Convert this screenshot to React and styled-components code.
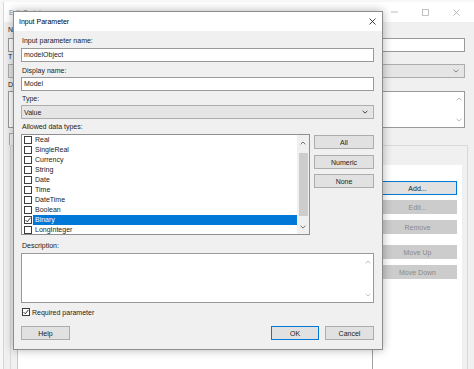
import React from "react";
import styled, { createGlobalStyle } from "styled-components";

const GlobalStyle = createGlobalStyle`
  html, body {
    margin: 0;
    padding: 0;
  }
  body {
    width: 474px;
    height: 369px;
    overflow: hidden;
    background: #f7f7f7;
    font-family: "Liberation Sans", Arial, sans-serif;
    font-size: 7px;
    color: #1b1b1b;
  }
  * {
    box-sizing: border-box;
  }
`;

const Screen = styled.div`
  position: relative;
  width: 474px;
  height: 369px;
  overflow: hidden;
`;

/* ---------- background window (mostly hidden by the dialog) ---------- */

const BackWindow = styled.div`
  margin: 2px 0 0 3px;
  width: 480px;
  height: 380px;
  display: flex;
  flex-direction: column;
  background: #f0f0f0;
  border-left: 1px solid #d6d6d6;
`;

const BackTitleBar = styled.div`
  height: 20px;
  background: #ffffff;
  display: flex;
  align-items: center;
  justify-content: space-between;
  padding: 0 11px 0 5px;
  color: #8a8a8a;
`;

const CaptionGroup = styled.div`
  display: flex;
`;

const CaptionButton = styled.div`
  width: 31px;
  height: 20px;
  display: flex;
  align-items: center;
  justify-content: center;
`;

const BackBody = styled.div`
  flex: 1;
  display: flex;
  flex-direction: column;
  padding: 0 18px 0 4px;
`;

const Label = styled.div`
  height: 10px;
  line-height: 10px;
  margin-top: ${({ $mt }) => $mt || 0}px;
  padding-left: ${({ $pl }) => $pl || 0}px;
  white-space: nowrap;
`;

const TextBox = styled.div`
  height: ${({ $h }) => $h || 14}px;
  margin-top: ${({ $mt }) => $mt || 0}px;
  background: #ffffff;
  border: 1px solid #999999;
  padding-left: 2px;
  line-height: 12px;
  white-space: nowrap;
  display: flex;
  justify-content: space-between;
`;

const ComboBox = styled.div`
  height: 14px;
  margin-top: ${({ $mt }) => $mt || 0}px;
  background: #e5e5e5;
  border: 1px solid #adadad;
  padding: 0 5px 0 2px;
  display: flex;
  align-items: center;
  justify-content: space-between;
`;

const ArrowStack = styled.div`
  width: 11px;
  display: flex;
  flex-direction: column;
  justify-content: space-between;
  align-items: center;
  padding: ${({ $pad }) => $pad || "5px 0"};
`;

const TabHeader = styled.div`
  margin: 5px 0 0 1px;
  width: 50px;
  height: 12px;
  border: 1px solid #adadad;
  border-bottom: none;
  background: #f7f7f7;
`;

const TabPage = styled.div`
  flex: 1;
  margin: 0 -3px 0 2px;
  border: 1px solid #d9d9d9;
  background: #f0f0f0;
  padding: 19px 5px 0 6px;
  display: flex;
`;

const WhitePanel = styled.div`
  flex: 1;
  background: #ffffff;
  border-left: 1px solid #c8c8c8;
  display: flex;
`;

const ListPane = styled.div`
  width: 355px;
  border-right: 1px solid #a0a0a0;
`;

const SideColumn = styled.div`
  display: flex;
  flex-direction: column;
  padding: 16px 0 0 5px;
`;

const SideButton = styled.div`
  width: 79px;
  height: 14px;
  margin-top: ${({ $mt }) => $mt || 0}px;
  display: flex;
  align-items: center;
  justify-content: center;
  background: ${({ $disabled }) => ($disabled ? "#cccccc" : "#e1e1e1")};
  border: 1px solid ${({ $disabled }) => ($disabled ? "#cccccc" : "#0078d7")};
  color: ${({ $disabled }) => ($disabled ? "#8a8a8a" : "#1b1b1b")};
`;

/* ---------- dialog ---------- */

const Dialog = styled.div`
  position: absolute;
  left: 13px;
  top: 11px;
  width: 370px;
  height: 339px;
  border: 1px solid #8c8c8c;
  background: #f0f0f0;
  box-shadow: 0 0 9px rgba(0, 0, 0, 0.3);
  display: flex;
  flex-direction: column;
`;

const DialogTitleBar = styled.div`
  height: 19px;
  background: #ffffff;
  display: flex;
  align-items: center;
  justify-content: space-between;
  padding-left: 5px;
  color: #000000;
`;

const CloseButton = styled.div`
  width: 20px;
  height: 19px;
  display: flex;
  align-items: center;
  justify-content: center;
`;

const DialogBody = styled.div`
  flex: 1;
  display: flex;
  flex-direction: column;
  padding: 0 8px 9px 7px;
`;

const ListRow = styled.div`
  margin-top: 2px;
  display: flex;
  gap: 4px;
`;

const TypeList = styled.div`
  width: 289px;
  height: 101px;
  border: 1px solid #8f8f8f;
  background: #ffffff;
  display: flex;
`;

const Items = styled.div`
  flex: 1;
  overflow: hidden;
`;

const ItemRow = styled.div`
  height: 10px;
  display: flex;
  align-items: center;
`;

const CheckBox = styled.div`
  width: 8px;
  height: 8px;
  margin-left: ${({ $ml }) => $ml || 0}px;
  border: 1px solid #3c3c3c;
  background: #ffffff;
  display: flex;
  align-items: center;
  justify-content: center;
  flex: none;
`;

const ItemText = styled.div`
  flex: 1;
  height: 10px;
  line-height: 10px;
  margin-left: 1px;
  padding-left: 2px;
  background: ${({ $selected }) => ($selected ? "#0078d7" : "transparent")};
  color: ${({ $selected }) => ($selected ? "#ffffff" : "#1b1b1b")};
`;

const ScrollBar = styled.div`
  width: 12px;
  background: #f0f0f0;
  display: flex;
  flex-direction: column;
  align-items: center;
  padding: 6px 0 5px;
`;

const ScrollThumb = styled.div`
  width: 9px;
  height: 63px;
  margin-top: 8px;
  background: #cdcdcd;
`;

const ListButtons = styled.div`
  display: flex;
  flex-direction: column;
  padding-top: 1px;
`;

const PushButton = styled.div`
  width: ${({ $w }) => $w || 48}px;
  height: 14px;
  margin-top: ${({ $mt }) => $mt || 0}px;
  background: #e1e1e1;
  border: 1px solid ${({ $primary }) => ($primary ? "#0078d7" : "#adadad")};
  display: flex;
  align-items: center;
  justify-content: center;
`;

const CheckRow = styled.div`
  margin-top: 4px;
  height: 10px;
  display: flex;
  align-items: center;
  gap: 2px;
`;

const FooterRow = styled.div`
  margin-top: 9px;
  display: flex;
  gap: 6px;
`;

const Spacer = styled.div`
  flex: 1;
`;

/* ---------- drawings ---------- */

const Chevron = ({ up, color = "#444444" }) => (
  <svg width="6" height="4" viewBox="0 0 6 4">
    <path
      d={up ? "M0.6 3.3 L3 1 L5.4 3.3" : "M0.6 0.8 L3 3.1 L5.4 0.8"}
      fill="none"
      stroke={color}
      strokeWidth="0.9"
    />
  </svg>
);

const Tick = () => (
  <svg width="6" height="6" viewBox="0 0 6 6">
    <path d="M0.6 3.1 L2.3 4.8 L5.4 0.9" fill="none" stroke="#202020" strokeWidth="0.9" />
  </svg>
);

const CrossIcon = ({ color, size = 7 }) => (
  <svg width={size} height={size} viewBox="0 0 7 7">
    <path d="M0.5 0.5 L6.5 6.5 M6.5 0.5 L0.5 6.5" stroke={color} strokeWidth="0.8" />
  </svg>
);

const types = [
  "Real",
  "SingleReal",
  "Currency",
  "String",
  "Date",
  "Time",
  "DateTime",
  "Boolean",
  "Binary",
  "LongInteger",
];

const App = () => {
  return (
    <Screen>
      <GlobalStyle />

      <BackWindow>
        <BackTitleBar>
          <span>Edit Script</span>
          <CaptionGroup>
            <CaptionButton>
              <svg width="7" height="2" viewBox="0 0 7 2">
                <path d="M0 1 H7" stroke="#a8a8a8" strokeWidth="0.8" />
              </svg>
            </CaptionButton>
            <CaptionButton>
              <svg width="7" height="7" viewBox="0 0 7 7">
                <rect x="0.5" y="0.5" width="6" height="6" fill="none" stroke="#b4b4b4" strokeWidth="0.8" />
              </svg>
            </CaptionButton>
            <CaptionButton>
              <CrossIcon color="#a8a8a8" />
            </CaptionButton>
          </CaptionGroup>
        </BackTitleBar>

        <BackBody>
          {/* only the first letter of each label peeks out from under the dialog */}
          <Label $mt={3}>N</Label>
          <TextBox $mt={3} />
          <Label>T</Label>
          <ComboBox $mt={2}>
            <span />
            <Chevron color="#777777" />
          </ComboBox>
          <Label $mt={2}>D</Label>
          <TextBox $mt={1} $h={37}>
            <span />
            <ArrowStack>
              <Chevron up color="#b0b0b0" />
              <Chevron color="#b0b0b0" />
            </ArrowStack>
          </TextBox>
          <TabHeader />
          <TabPage>
            <WhitePanel>
              <ListPane />
              <SideColumn>
                <SideButton>Add...</SideButton>
                <SideButton $disabled $mt={5}>Edit...</SideButton>
                <SideButton $disabled $mt={6}>Remove</SideButton>
                <SideButton $disabled $mt={11}>Move Up</SideButton>
                <SideButton $disabled $mt={6}>Move Down</SideButton>
              </SideColumn>
            </WhitePanel>
          </TabPage>
        </BackBody>
      </BackWindow>

      <Dialog>
        <DialogTitleBar>
          <span>Input Parameter</span>
          <CloseButton>
            <CrossIcon color="#111111" />
          </CloseButton>
        </DialogTitleBar>

        <DialogBody>
          <Label $mt={5} $pl={1}>Input parameter name:</Label>
          <TextBox $mt={2}>modelObject</TextBox>
          <Label $mt={4} $pl={1}>Display name:</Label>
          <TextBox $mt={1}>Model</TextBox>
          <Label $mt={3} $pl={1}>Type:</Label>
          <ComboBox $mt={1}>
            <span>Value</span>
            <Chevron color="#333333" />
          </ComboBox>
          <Label $mt={3} $pl={1}>Allowed data types:</Label>

          <ListRow>
            <TypeList>
              <Items>
                {types.map((t) => (
                  <ItemRow key={t}>
                    <CheckBox $ml={2}>{t === "Binary" && <Tick />}</CheckBox>
                    <ItemText $selected={t === "Binary"}>{t}</ItemText>
                  </ItemRow>
                ))}
              </Items>
              <ScrollBar>
                <Chevron up color="#606060" />
                <ScrollThumb />
                <Spacer />
                <Chevron color="#606060" />
              </ScrollBar>
            </TypeList>
            <ListButtons>
              <PushButton $w={60}>All</PushButton>
              <PushButton $w={60} $mt={6}>Numeric</PushButton>
              <PushButton $w={60} $mt={5}>None</PushButton>
            </ListButtons>
          </ListRow>

          <Label $mt={6} $pl={1}>Description:</Label>
          <TextBox $mt={2} $h={50}>
            <span />
            <ArrowStack $pad="6px 0 5px">
              <Chevron up color="#b8b8b8" />
              <Chevron color="#b8b8b8" />
            </ArrowStack>
          </TextBox>

          <CheckRow>
            <CheckBox $ml={1}>
              <Tick />
            </CheckBox>
            <span>Required parameter</span>
          </CheckRow>

          <FooterRow>
            <PushButton $w={49}>Help</PushButton>
            <Spacer />
            <PushButton $primary>OK</PushButton>
            <PushButton $w={49}>Cancel</PushButton>
          </FooterRow>
        </DialogBody>
      </Dialog>
    </Screen>
  );
};

export default App;
